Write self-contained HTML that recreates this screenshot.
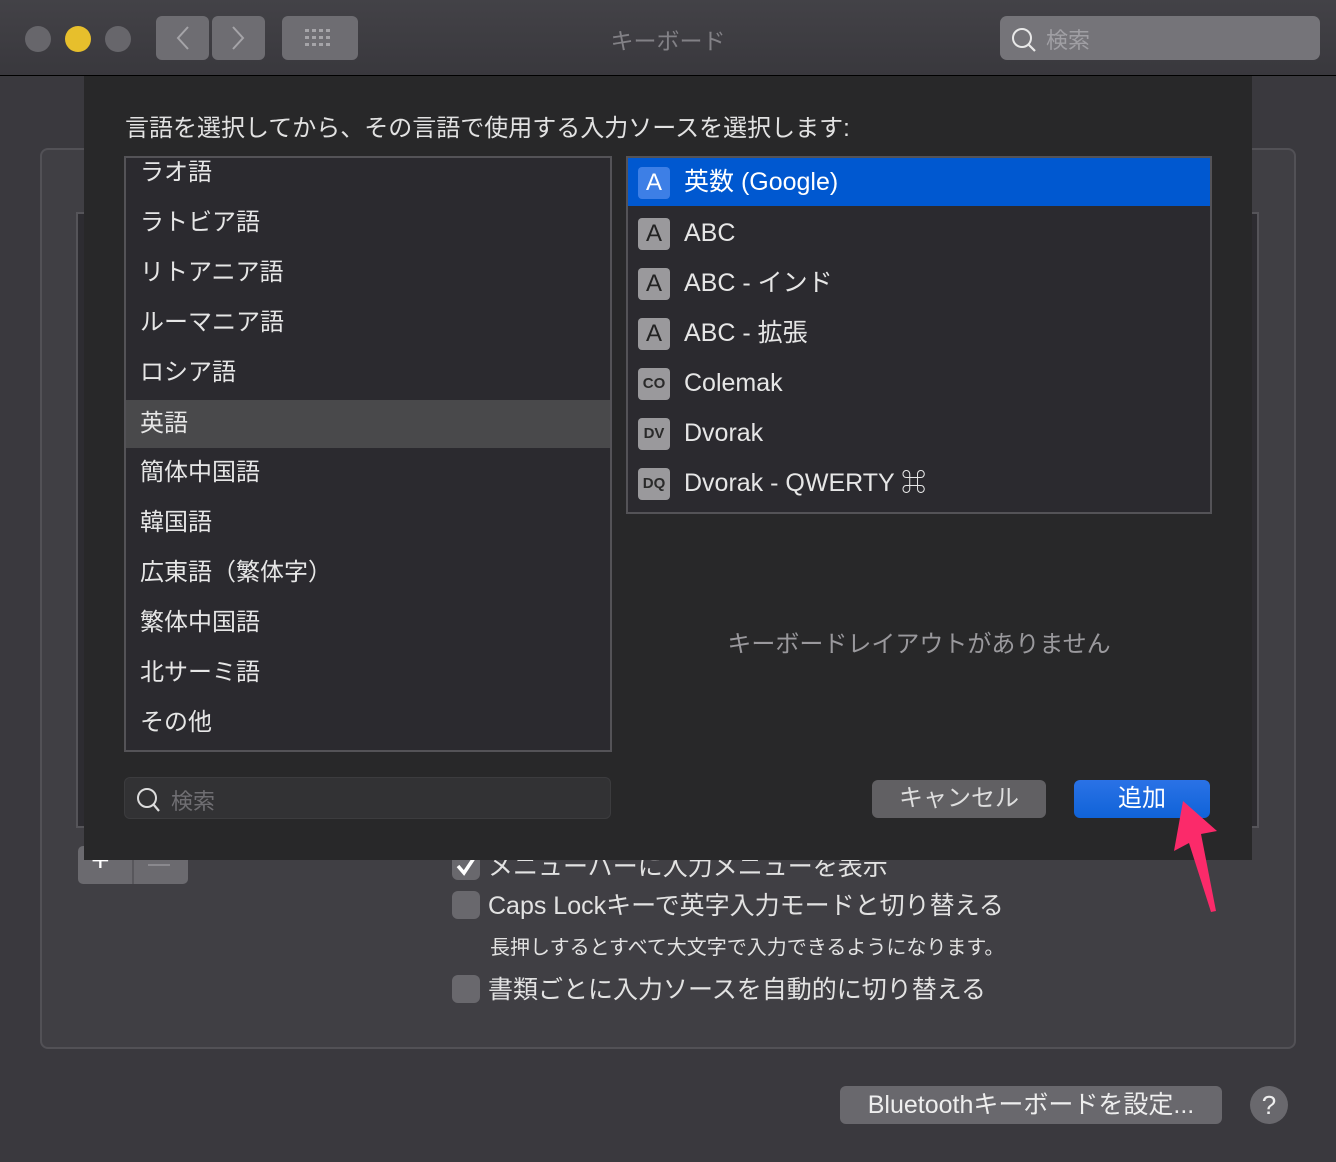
<!DOCTYPE html>
<html><head><meta charset="utf-8"><style>
*{margin:0;padding:0;box-sizing:border-box}
body{width:1336px;height:1162px;background:#3a393e;font-family:"Liberation Sans","Noto Sans CJK JP",sans-serif;color:#e6e6e6;position:relative;overflow:hidden}
.a{position:absolute}
.title{left:0;top:0;width:1336px;height:76px;background:linear-gradient(#434247,#39383d);border-bottom:1px solid #000}
.dot{width:26px;height:26px;border-radius:50%;top:26px;background:#67666b}
.tb{background:#6e6d72;border-radius:6px;top:16px;height:44px}
.sheet{left:84px;top:76px;width:1168px;height:784px;background:#282829;z-index:5}
.list{background:#2b2a2f;border:2px solid #545357;overflow:hidden}
.row{position:absolute;left:0;right:0;height:50px;font-size:24px;line-height:50px;padding-left:14px}
.ic{position:absolute;left:10px;top:10px;width:32px;height:32px;border-radius:4px;background:#9a999c;color:#222;text-align:center;line-height:32px;font-size:24px}
.ic.s{font-size:15px;font-weight:bold;color:#2a2a2a}
.btn{border-radius:6px;text-align:center;font-size:24px}
.cb{width:28px;height:28px;border-radius:6px;background:#69686d;left:452px}
.ct{left:488px;font-size:25px;color:#e2e2e2}
</style></head><body>
<div class="a title">
 <div class="a dot" style="left:25px"></div>
 <div class="a dot" style="left:65px;background:#e7bf2c"></div>
 <div class="a dot" style="left:105px"></div>
 <div class="a tb" style="left:156px;width:53px"><svg width="53" height="44"><path d="M32 11 L22 22 L32 33" stroke="#a5a4a8" stroke-width="2" fill="none"/></svg></div>
 <div class="a tb" style="left:212px;width:53px"><svg width="53" height="44"><path d="M21 11 L31 22 L21 33" stroke="#a5a4a8" stroke-width="2" fill="none"/></svg></div>
 <div class="a tb" style="left:282px;width:76px"><svg width="76" height="44"><g fill="#a5a4a8"><rect x="23" y="13" width="4" height="3"/><rect x="30" y="13" width="4" height="3"/><rect x="37" y="13" width="4" height="3"/><rect x="44" y="13" width="4" height="3"/><rect x="23" y="20" width="4" height="3"/><rect x="30" y="20" width="4" height="3"/><rect x="37" y="20" width="4" height="3"/><rect x="44" y="20" width="4" height="3"/><rect x="23" y="27" width="4" height="3"/><rect x="30" y="27" width="4" height="3"/><rect x="37" y="27" width="4" height="3"/><rect x="44" y="27" width="4" height="3"/></g></svg></div>
 <div class="a" style="left:0;width:1336px;top:22px;text-align:center;font-size:23px;color:#828186">キーボード</div>
 <div class="a" style="left:1000px;top:16px;width:320px;height:44px;border-radius:7px;background:#757479">
  <svg class="a" style="left:10px;top:10px" width="28" height="28"><circle cx="12" cy="12" r="9" stroke="#e8e8e8" stroke-width="2" fill="none"/><path d="M18.5 18.5 L25 25" stroke="#e8e8e8" stroke-width="2.2"/></svg>
  <div class="a" style="left:46px;top:7px;font-size:22px;color:#a09fa4">検索</div>
 </div>
</div>
<div class="a" style="left:40px;top:148px;width:1256px;height:901px;border:2px solid #525156;border-radius:8px;background:#403f44"></div>
<div class="a" style="left:76px;top:212px;width:1183px;height:616px;border:2px solid #555459;background:#2d2c31"></div>
<div class="a" style="left:78px;top:846px;width:110px;height:38px;border-radius:5px;background:#6b6a6f"><div class="a" style="left:54px;top:0;width:2px;height:38px;background:#58575c"></div><div class="a" style="left:13px;top:-4px;font-size:32px;color:#fff">+</div><div class="a" style="left:70px;top:18px;width:22px;height:2px;background:#8a898e"></div></div>
<div class="a cb" style="top:852px"><svg width="28" height="28"><path d="M6 14 L12 21 L22 6" stroke="#fff" stroke-width="3.5" fill="none"/></svg></div>
<div class="a ct" style="top:847px">メニューバーに入力メニューを表示</div>
<div class="a cb" style="top:891px"></div>
<div class="a ct" style="top:886px">Caps Lockキーで英字入力モードと切り替える</div>
<div class="a" style="left:490px;top:931px;font-size:20px;color:#e2e2e2">長押しするとすべて大文字で入力できるようになります。</div>
<div class="a cb" style="top:975px"></div>
<div class="a ct" style="top:970px">書類ごとに入力ソースを自動的に切り替える</div>
<div class="a btn" style="left:840px;top:1086px;width:382px;height:38px;background:#69686d;line-height:38px;color:#eee;font-size:25px">Bluetoothキーボードを設定...</div>
<div class="a" style="left:1250px;top:1086px;width:38px;height:38px;border-radius:50%;background:#69686d;text-align:center;line-height:38px;font-size:26px;color:#eee">?</div>
<div class="a sheet">
 <div class="a" style="left:41px;top:32px;font-size:24px;color:#e2e2e2">言語を選択してから、その言語で使用する入力ソースを選択します:</div>
 <div class="a list" style="left:40px;top:80px;width:488px;height:596px">
  <div class="row" style="top:-10px">ラオ語</div>
  <div class="row" style="top:40px">ラトビア語</div>
  <div class="row" style="top:90px">リトアニア語</div>
  <div class="row" style="top:140px">ルーマニア語</div>
  <div class="row" style="top:190px">ロシア語</div>
  <div class="row" style="top:242px;height:48px;line-height:48px;background:#49494b">英語</div>
  <div class="row" style="top:290px">簡体中国語</div>
  <div class="row" style="top:340px">韓国語</div>
  <div class="row" style="top:390px">広東語（繁体字）</div>
  <div class="row" style="top:440px">繁体中国語</div>
  <div class="row" style="top:490px">北サーミ語</div>
  <div class="row" style="top:540px">その他</div>
 </div>
 <div class="a list" style="left:542px;top:80px;width:586px;height:358px">
  <div class="row" style="top:0;height:48px;line-height:48px;background:#0058d0;padding-left:56px;color:#fff;font-size:25px"><div class="ic" style="top:9px;background:#3d7fe6;color:#fff">A</div>英数 (Google)</div>
  <div class="row" style="top:50px;padding-left:56px;font-size:25px"><div class="ic">A</div>ABC</div>
  <div class="row" style="top:100px;padding-left:56px;font-size:25px"><div class="ic">A</div>ABC - インド</div>
  <div class="row" style="top:150px;padding-left:56px;font-size:25px"><div class="ic">A</div>ABC - 拡張</div>
  <div class="row" style="top:200px;padding-left:56px;font-size:25px"><div class="ic s">CO</div>Colemak</div>
  <div class="row" style="top:250px;padding-left:56px;font-size:25px"><div class="ic s">DV</div>Dvorak</div>
  <div class="row" style="top:300px;padding-left:56px;font-size:25px"><div class="ic s">DQ</div>Dvorak - QWERTY ⌘</div>
 </div>
 <div class="a" style="left:542px;width:586px;top:548px;text-align:center;font-size:24px;color:#9a999d">キーボードレイアウトがありません</div>
 <div class="a" style="left:40px;top:701px;width:487px;height:42px;border-radius:6px;background:#323234;border:1px solid #3c3c3e">
  <svg class="a" style="left:10px;top:8px" width="28" height="28"><circle cx="12" cy="12" r="9" stroke="#dcdcdc" stroke-width="2" fill="none"/><path d="M18.5 18.5 L24 25" stroke="#dcdcdc" stroke-width="2.2"/></svg>
  <div class="a" style="left:46px;top:6px;font-size:22px;color:#6f6e72">検索</div>
 </div>
 <div class="a btn" style="left:788px;top:704px;width:174px;height:38px;background:#616063;line-height:38px;color:#dedede">キャンセル</div>
 <div class="a btn" style="left:990px;top:704px;width:136px;height:38px;background:linear-gradient(#2a72e6,#1063d8);line-height:38px;color:#fff">追加</div>
</div>
<svg class="a" style="left:0;top:0;z-index:6" width="1336" height="1162"><polygon points="1183,801 1217,831 1201,834 1216,911 1211,912 1189,843 1174,851" fill="#fb2a6a"/></svg>
</body></html>
